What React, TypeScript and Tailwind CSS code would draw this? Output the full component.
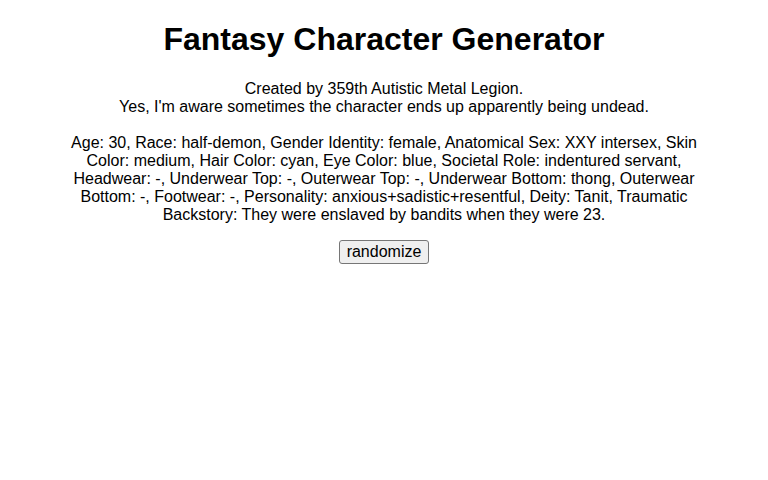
const character = {
  Age: "30",
  Race: "half-demon",
  "Gender Identity": "female",
  "Anatomical Sex": "XXY intersex",
  "Skin Color": "medium",
  "Hair Color": "cyan",
  "Eye Color": "blue",
  "Societal Role": "indentured servant",
  Headwear: "-",
  "Underwear Top": "-",
  "Outerwear Top": "-",
  "Underwear Bottom": "thong",
  "Outerwear Bottom": "-",
  Footwear: "-",
  Personality: "anxious+sadistic+resentful",
  Deity: "Tanit",
  "Traumatic Backstory": "They were enslaved by bandits when they were 23.",
};

export default function App() {
  const description = Object.entries(character)
    .map(([k, v]) => `${k}: ${v}`)
    .join(", ");

  return (
    <div className="min-h-[480px] bg-white text-center text-black font-['Liberation_Sans',Arial,sans-serif] text-base leading-[normal]">
      <h1 className="my-[21.44px] text-[32px] font-bold leading-[normal]">
        Fantasy Character Generator
      </h1>
      <p className="my-4">
        Created by 359th Autistic Metal Legion.
        <br />
        Yes, I'm aware sometimes the character ends up apparently being undead.
      </p>
      <p className="mx-auto mt-[18px] mb-4 max-w-[640px]">{description}</p>
      <button className="rounded-[3px] border border-[#767676] bg-[#efefef] px-[7px] py-[2px] text-base leading-[normal]">
        randomize
      </button>
    </div>
  );
}
